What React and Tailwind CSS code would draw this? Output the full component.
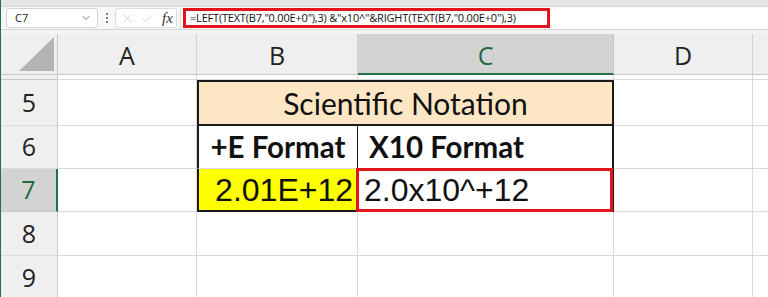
import React from "react";
import { ChevronDown, X, Check } from "lucide-react";

const grid = "border-r border-b border-[#dadada]";

function RowHead({ n, h, active }) {
  return (
    <div
      className={`w-[57px] shrink-0 flex items-center justify-center text-[25px] border-b ${
        active
          ? "bg-[#d3d3d3] text-[#1e6b41] border-r-2 border-r-[#217346] border-b-[#c6c6c6]"
          : "bg-[#efefef] text-[#222] border-r border-r-[#c8c8c8] border-b-[#dcdcdc]"
      } ${h}`}
    >
      {n}
    </div>
  );
}

function ColHead({ label, w, active }) {
  return (
    <div
      className={`${w} h-full shrink-0 flex items-center justify-center text-[25px] pt-[4px] border-r ${
        active
          ? "bg-[#d3d3d3] text-[#1e6b41] border-b-2 border-b-[#217346] border-r-[#c6c6c6]"
          : "bg-[#efefef] text-[#222] border-b border-b-[#c6c6c6] border-r-[#d0d0d0]"
      }`}
    >
      {label}
    </div>
  );
}

export default function App() {
  return (
    <div className="w-[768px] h-[297px] overflow-hidden bg-white flex font-['Open_Sans',sans-serif]">
      {/* window edge */}
      <div className="w-px shrink-0 bg-[#217346]" />

      <div className="flex-1 flex flex-col min-w-0">
        {/* ribbon edge */}
        <div className="h-[7px] shrink-0 bg-[#e4e4e4] border-b border-[#d6d6d6]" />

        {/* formula bar */}
        <div className="h-[22px] shrink-0 flex items-center bg-[#f7f7f7]">
          <div className="ml-[5px] w-[92px] h-[20px] bg-white border border-[#d4d4d4] rounded-[3px] flex items-center justify-between pl-[8px] pr-[5px] text-[11px] text-[#222]">
            <span>C7</span>
            <ChevronDown size={12} strokeWidth={1.5} className="text-[#555]" />
          </div>
          <div className="w-[16px] flex flex-col items-center gap-[2px] ml-[1px]">
            <span className="w-[2px] h-[2px] bg-[#555] rounded-full" />
            <span className="w-[2px] h-[2px] bg-[#555] rounded-full" />
            <span className="w-[2px] h-[2px] bg-[#555] rounded-full" />
          </div>
          <div className="w-[62px] h-[20px] bg-white border border-[#dcdcdc] rounded-[3px] flex items-center pl-[4px] gap-[5px]">
            <X size={15} strokeWidth={1.2} className="text-[#c6c6c6]" />
            <Check size={15} strokeWidth={1.2} className="text-[#c6c6c6]" />
            <span className="ml-[2px] text-[15px] italic text-[#333] font-['Liberation_Serif',serif]">fx</span>
          </div>
          <div className="ml-[3px] flex-1 h-[21px] bg-white border-l border-[#dcdcdc] flex items-center">
            <div className="ml-[2px] w-[367px] h-[20px] border-[3px] border-[#e3141b] flex items-center pl-[4px] text-[11px] text-[#111] whitespace-nowrap tracking-[-0.2px]">
              =LEFT(TEXT(B7,"0.00E+0"),3) &amp;"x10^"&amp;RIGHT(TEXT(B7,"0.00E+0"),3)
            </div>
          </div>
        </div>

        {/* column headers */}
        <div className="h-[5px] shrink-0 bg-[#f3f3f3] border-t border-[#d6d6d6]" />
        <div className="h-[41px] shrink-0 flex">
          <div className="w-[57px] h-full shrink-0 bg-[#efefef] border-r border-b border-[#c6c6c6] flex items-end justify-end pr-[3px] pb-[3px]">
            <svg width="35" height="34" viewBox="0 0 35 34">
              <polygon points="35,0 35,34 0,34" fill="#b4b4b4" />
            </svg>
          </div>
          <ColHead label="A" w="w-[139px]" />
          <ColHead label="B" w="w-[161px]" />
          <ColHead label="C" w="w-[256px]" active />
          <ColHead label="D" w="w-[139px]" />
          <div className="flex-1 h-full bg-[#efefef] border-b border-[#c6c6c6]" />
        </div>

        {/* row 4 remainder */}
        <div className="h-[5px] shrink-0 flex">
          <div className="w-[57px] shrink-0 bg-[#efefef] border-r border-b border-[#c8c8c8]" />
          <div className={`w-[139px] shrink-0 ${grid}`} />
          <div className={`w-[161px] shrink-0 ${grid}`} />
          <div className={`w-[256px] shrink-0 ${grid}`} />
          <div className={`w-[139px] shrink-0 ${grid}`} />
          <div className="flex-1 border-b border-[#dadada]" />
        </div>

        {/* row 5 */}
        <div className="h-[46px] shrink-0 flex">
          <RowHead n="5" h="h-full" />
          <div className={`w-[139px] shrink-0 ${grid}`} />
          <div className="w-[417px] shrink-0 bg-[#fce6c3] border-2 border-[#1a1a1a] flex items-center justify-center text-[30px] text-[#111] font-['Lato',sans-serif]">
            Scientific Notation
          </div>
          <div className={`w-[139px] shrink-0 ${grid}`} />
          <div className="flex-1 border-b border-[#dadada]" />
        </div>

        {/* row 6 */}
        <div className="h-[43px] shrink-0 flex">
          <RowHead n="6" h="h-full" />
          <div className={`w-[139px] shrink-0 ${grid}`} />
          <div className="w-[161px] shrink-0 border-l-2 border-r border-[#1a1a1a] border-b border-b-[#dadada] flex items-center justify-center text-[29.5px] font-bold text-[#111] font-['Lato',sans-serif]">
            +E Format
          </div>
          <div className="w-[256px] shrink-0 border-r-2 border-[#1a1a1a] border-b border-b-[#dadada] flex items-center pl-[11px] text-[29.5px] font-bold text-[#111] font-['Lato',sans-serif]">
            X10 Format
          </div>
          <div className={`w-[139px] shrink-0 ${grid}`} />
          <div className="flex-1 border-b border-[#dadada]" />
        </div>

        {/* row 7 */}
        <div className="h-[43px] shrink-0 flex">
          <RowHead n="7" h="h-full" active />
          <div className={`w-[139px] shrink-0 ${grid}`} />
          <div className="w-[161px] shrink-0 bg-[#ffff00] border-l-2 border-b-2 border-r border-[#1a1a1a] flex items-center justify-end pr-[4px] text-[32px] text-[#111] font-['Liberation_Sans',sans-serif]">
            2.01E+12
          </div>
          <div className="relative w-[256px] shrink-0 border-r-2 border-b-2 border-[#1a1a1a] flex items-center pl-[6px] text-[32px] text-[#111] font-['Liberation_Sans',sans-serif]">
            2.0x10^+12
            <div className="absolute -left-[2px] -top-[1px] -right-[1px] -bottom-[2px] border-[3px] border-[#e3141b]" />
          </div>
          <div className={`w-[139px] shrink-0 ${grid}`} />
          <div className="flex-1 border-b border-[#dadada]" />
        </div>

        {/* row 8 */}
        <div className="h-[44px] shrink-0 flex">
          <RowHead n="8" h="h-full" />
          <div className={`w-[139px] shrink-0 ${grid}`} />
          <div className={`w-[161px] shrink-0 ${grid}`} />
          <div className={`w-[256px] shrink-0 ${grid}`} />
          <div className={`w-[139px] shrink-0 ${grid}`} />
          <div className="flex-1 border-b border-[#dadada]" />
        </div>

        {/* row 9 */}
        <div className="h-[44px] shrink-0 flex">
          <RowHead n="9" h="h-full" />
          <div className={`w-[139px] shrink-0 ${grid}`} />
          <div className={`w-[161px] shrink-0 ${grid}`} />
          <div className={`w-[256px] shrink-0 ${grid}`} />
          <div className={`w-[139px] shrink-0 ${grid}`} />
          <div className="flex-1 border-b border-[#dadada]" />
        </div>
      </div>
    </div>
  );
}
